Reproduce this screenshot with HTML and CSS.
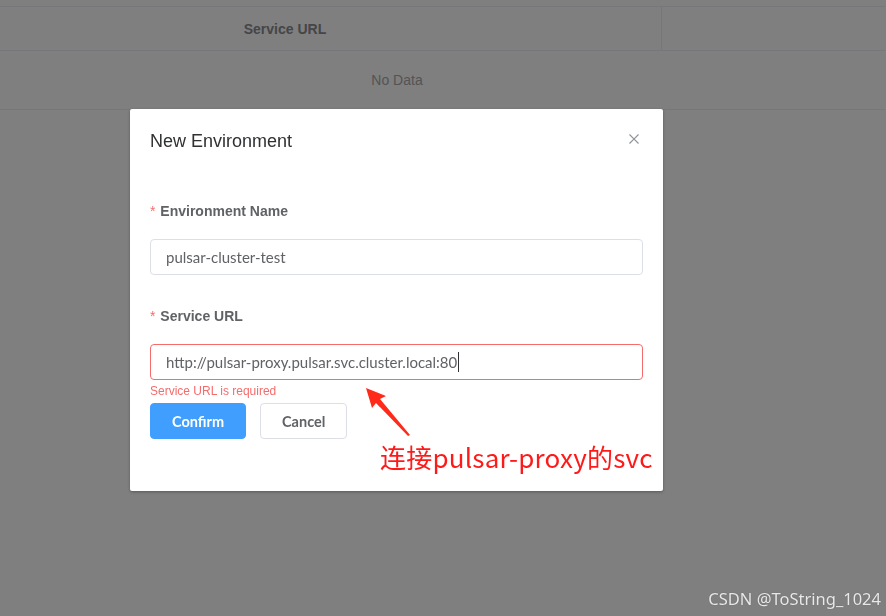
FILE: index.html
```html
<!DOCTYPE html>
<html lang="en">
<head>
<meta charset="utf-8">
<title>New Environment</title>
<link rel="stylesheet" href="styles.css">
</head>
<body>
<div class="page">
  <div class="table">
    <div class="row head">
      <div class="cell c1">Service URL</div>
      <div class="cell c2"></div>
    </div>
    <div class="row empty">
      <div class="cell full">No Data</div>
    </div>
  </div>
</div>

<div class="mask"></div>

<div class="dialog">
  <div class="dialog-header">
    <span class="dialog-title">New Environment</span>
    <svg class="close" width="10" height="10" viewBox="0 0 10 10"><path d="M0.5 0.5 L9.5 9.5 M9.5 0.5 L0.5 9.5" stroke="#909399" stroke-width="1.2" fill="none"/></svg>
  </div>
  <div class="dialog-body">
    <div class="form-item first">
      <div class="label"><span class="req">*</span> Environment Name</div>
      <div class="input">pulsar-cluster-test</div>
    </div>
    <div class="form-item error-item">
      <div class="label"><span class="req">*</span> Service URL</div>
      <div class="input invalid">http://pulsar-proxy.pulsar.svc.cluster.local:80<span class="caret"></span></div>
      <div class="error">Service URL is required</div>
    </div>
    <div class="actions">
      <button class="btn primary">Confirm</button>
      <button class="btn">Cancel</button>
    </div>
  </div>
  <svg class="arrow" width="60" height="60" viewBox="0 0 60 60">
    <path d="M2 2 L22 10 L16 13 L46 49 L44 50 L12 17 L8 22 Z" fill="#ff2a1a"/>
  </svg>
  <div class="note">连接pulsar-proxy的svc</div>
</div>

<div class="watermark">CSDN @ToString_1024</div>
</body>
</html>
```
FILE: styles.css
```css
html, body {
  margin: 0;
  padding: 0;
  background: #fff;
  font-family: "Liberation Sans", Arial, sans-serif;
  overflow: hidden;
}
.page {
  padding-top: 6px;
  height: 610px;
}
.table {
  margin-left: -91px;
  width: 976px;
  border-top: 1px solid #ebeef5;
}
.row {
  display: flex;
  border-bottom: 1px solid #ebeef5;
}
.head {
  height: 43px;
}
.cell {
  display: flex;
  align-items: center;
  justify-content: center;
  font-size: 14px;
  color: #909399;
}
.c1 {
  width: 752px;
  border-right: 1px solid #ebeef5;
  font-weight: bold;
  color: #8a8c91;
}
.c2 {
  flex: 1;
}
.empty {
  height: 58px;
}
.full {
  flex: 1;
  color: #a8a8a8;
}
.mask {
  position: fixed;
  inset: 0;
  background: rgba(0, 0, 0, 0.5);
}
.dialog {
  position: absolute;
  left: 130px;
  top: 109px;
  width: 533px;
  height: 382px;
  background: #fff;
  border-radius: 2px;
  box-shadow: 0 1px 3px rgba(0, 0, 0, 0.3);
  box-sizing: border-box;
}
.dialog-header {
  padding: 20px 20px 10px;
  display: flex;
  align-items: center;
  justify-content: space-between;
}
.dialog-title {
  font-size: 18px;
  line-height: 24px;
  color: #303133;
}
.close {
  margin-right: 4px;
  margin-top: -4px;
}
.dialog-body {
  padding: 30px 20px 0;
}
.form-item {
  margin-bottom: 22px;
}
.form-item.first {
  margin-bottom: 23px;
}
.error-item {
  margin-bottom: 19px;
}
.label {
  font-size: 14px;
  font-weight: bold;
  color: #606266;
  line-height: 36px;
  margin-bottom: 10px;
}
.req {
  color: #f56c6c;
  font-weight: normal;
  margin-right: 1px;
}
.input {
  height: 36px;
  box-sizing: border-box;
  border: 1px solid #dcdfe6;
  border-radius: 4px;
  padding: 0 15px;
  display: flex;
  align-items: center;
  font-family: Lato, "Liberation Sans", sans-serif;
  font-size: 15px;
  color: #606266;
}
.invalid {
  border-color: #f56c6c;
}
.caret {
  display: inline-block;
  width: 1px;
  height: 20px;
  background: #303133;
  margin-left: 1px;
}
.error {
  font-size: 12px;
  color: #f56c6c;
  line-height: 14px;
  padding-top: 4px;
  height: 0;
}
.actions {
  display: flex;
  gap: 14px;
}
.btn {
  height: 36px;
  box-sizing: border-box;
  border: 1px solid #dcdfe6;
  border-radius: 4px;
  background: #fff;
  color: #606266;
  font-family: Lato, "Liberation Sans", sans-serif;
  font-size: 14.5px;
  font-weight: bold;
  padding: 0 21px;
}
.btn.primary {
  background: #409eff;
  border-color: #409eff;
  color: #fff;
  width: 96px;
}
.arrow {
  position: absolute;
  left: 234px;
  top: 277px;
}
.note {
  position: absolute;
  left: 250px;
  top: 331px;
  font-family: "Noto Sans CJK SC", sans-serif;
  font-size: 26px;
  letter-spacing: 0.2px;
  line-height: 34px;
  color: #ff1a1a;
  white-space: nowrap;
}
.watermark {
  position: absolute;
  right: 5px;
  top: 588px;
  font-family: "Noto Sans", sans-serif;
  font-size: 16.5px;
  line-height: 22px;
  color: #e8e8e8;
  text-shadow: 0 0 1px rgba(0, 0, 0, 0.3);
}
```
